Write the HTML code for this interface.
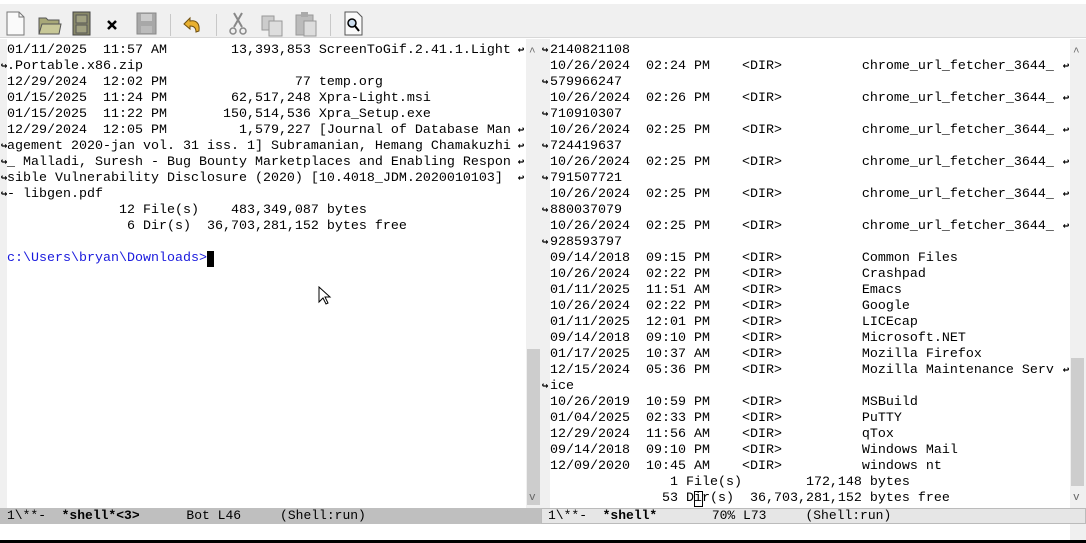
<!DOCTYPE html>
<html><head><meta charset="utf-8"><style>
*{margin:0;padding:0;box-sizing:border-box}
body{width:1086px;height:543px;overflow:hidden;background:#fff;position:relative;font-family:"Liberation Mono",monospace;font-size:13.33px}
.tb{position:absolute;left:0;top:4px;width:1086px;height:34px;background:#f0f0f0;border-bottom:1px solid #d8d8d8}
.l{position:absolute;height:16px;line-height:16px;white-space:pre;color:#000}
.fr{position:absolute;background:#f0f0f0}
.g{position:absolute;width:8px;height:16px;line-height:16px;font-size:11px;font-weight:bold;text-align:center}
.ml{position:absolute;top:508px;height:16px;line-height:16px;white-space:pre;font-size:13px}
.sep{position:absolute;top:10px;width:1px;height:22px;background:#c8c8c8}
</style></head><body>
<div class="tb">
<svg width="380" height="34" style="position:absolute;left:0;top:0">
<path d="M7 8h12l5 5v18H7z" fill="#fafafa" stroke="#777"/><path d="M19 8v5h5" fill="none" stroke="#777"/>
<path d="M39 14h7l2 2h11v14H39z" fill="#a8a878" stroke="#555"/><path d="M39 30l3-10h19l-2 10z" fill="#c8c898" stroke="#555"/>
<rect x="73" y="8" width="17" height="23" fill="#8a8a6a" stroke="#444"/><rect x="76" y="11" width="11" height="8" fill="#a0a080" stroke="#555"/><rect x="76" y="21" width="11" height="8" fill="#a0a080" stroke="#555"/>
<path d="M108 17l8 8M116 17l-8 8" stroke="#000" stroke-width="2.5"/>
<rect x="137" y="9" width="19" height="21" fill="#a8a8a8" stroke="#888"/><rect x="141" y="10" width="11" height="7" fill="#ccc"/><rect x="141" y="22" width="11" height="7" fill="#bbb"/>
<path d="M199 27c1-8-3-11-9-10v-3l-6 6 6 5v-3c4 0 6 2 6 6z" fill="#e8b030" stroke="#705010"/>
<path d="M234 9l8 14M242 9l-8 14" stroke="#888" stroke-width="2"/><circle cx="233" cy="27" r="3" fill="none" stroke="#888" stroke-width="1.5"/><circle cx="243" cy="27" r="3" fill="none" stroke="#888" stroke-width="1.5"/>
<rect x="262" y="12" width="12" height="14" fill="#ccc" stroke="#999"/><rect x="269" y="17" width="13" height="15" fill="#ddd" stroke="#999"/>
<rect x="296" y="11" width="17" height="20" fill="#bbb" stroke="#999"/><rect x="301" y="8" width="7" height="5" fill="#aaa"/><rect x="304" y="17" width="12" height="15" fill="#ddd" stroke="#999"/>
<path d="M345 8h12l5 5v18h-17z" fill="#fafafa" stroke="#555"/><circle cx="352" cy="19" r="4" fill="#cde" stroke="#000" stroke-width="1.5"/><path d="M355 22l4 5" stroke="#000" stroke-width="2"/>
</svg>
<div class="sep" style="left:170px"></div><div class="sep" style="left:216px"></div><div class="sep" style="left:330px"></div>
</div>

<div class="fr" style="left:0;top:39px;width:7px;height:469px"></div>
<div class="fr" style="left:516px;top:39px;width:10px;height:469px;background:#fff"></div>
<div class="fr" style="left:526px;top:39px;width:15px;height:469px;background:#f0f0f0"></div>
<div class="fr" style="left:527px;top:349px;width:13px;height:156px;background:#cdcdcd"></div>
<div id="lp"></div>
<div class="l" style="left:7px;top:251px;color:#1a1add">c:\Users\bryan\Downloads&gt;</div>
<div style="position:absolute;left:207px;top:251px;width:7px;height:16px;background:#000"></div>
<svg width="14" height="20" style="position:absolute;left:318px;top:286px"><path d="M1 1v15l4-4 3 6 2-1-3-6h5z" fill="#fff" stroke="#000"/></svg>

<div class="fr" style="left:541px;top:39px;width:9px;height:469px"></div>
<div class="fr" style="left:1062px;top:39px;width:8px;height:469px;background:#fff"></div>
<div class="fr" style="left:1070px;top:39px;width:16px;height:469px;background:#f0f0f0"></div>
<div class="fr" style="left:1071px;top:358px;width:13px;height:128px;background:#cdcdcd"></div>
<div class="l" style="left:1073px;top:45px;font-size:11px;color:#666">^</div>
<div class="l" style="left:529px;top:45px;font-size:11px;color:#666">^</div>
<div class="l" style="left:529px;top:490px;font-size:11px;color:#666">v</div>
<div class="l" style="left:1073px;top:490px;font-size:11px;color:#666">v</div>
<div id="r"></div>
<script>
function esc(s){return s.replace(/</g,"&lt;").replace(/>/g,"&gt;");}
function build(rows,x,fx,ax){var h="";rows.forEach(function(r,i){var t=43+i*16;
if(r[0]=="c")h+='<div class="g" style="left:'+fx+'px;top:'+t+'px">↪</div>';
h+='<div class="l" style="left:'+x+'px;top:'+t+'px">'+esc(r[1])+'</div>';
if(r[2])h+='<div class="g" style="left:'+ax+'px;top:'+t+'px">↩</div>';});return h;}
var lrows=[
["","01/11/2025  11:57 AM        13,393,853 ScreenToGif.2.41.1.Light",1],
["c",".Portable.x86.zip"],
["","12/29/2024  12:02 PM                77 temp.org"],
["","01/15/2025  11:24 PM        62,517,248 Xpra-Light.msi"],
["","01/15/2025  11:22 PM       150,514,536 Xpra_Setup.exe"],
["","12/29/2024  12:05 PM         1,579,227 [Journal of Database Man",1],
["c","agement 2020-jan vol. 31 iss. 1] Subramanian, Hemang Chamakuzhi",1],
["c","_ Malladi, Suresh - Bug Bounty Marketplaces and Enabling Respon",1],
["c","sible Vulnerability Disclosure (2020) [10.4018_JDM.2020010103]",1],
["c","- libgen.pdf"],
["","              12 File(s)    483,349,087 bytes"],
["","               6 Dir(s)  36,703,281,152 bytes free"]];
document.getElementById("lp").innerHTML=build(lrows,7,0,517);
var rows=[
["c","2140821108"],
["","10/26/2024  02:24 PM    <DIR>          chrome_url_fetcher_3644_",1],
["c","579966247"],
["","10/26/2024  02:26 PM    <DIR>          chrome_url_fetcher_3644_",1],
["c","710910307"],
["","10/26/2024  02:25 PM    <DIR>          chrome_url_fetcher_3644_",1],
["c","724419637"],
["","10/26/2024  02:25 PM    <DIR>          chrome_url_fetcher_3644_",1],
["c","791507721"],
["","10/26/2024  02:25 PM    <DIR>          chrome_url_fetcher_3644_",1],
["c","880037079"],
["","10/26/2024  02:25 PM    <DIR>          chrome_url_fetcher_3644_",1],
["c","928593797"],
["","09/14/2018  09:15 PM    <DIR>          Common Files"],
["","10/26/2024  02:22 PM    <DIR>          Crashpad"],
["","01/11/2025  11:51 AM    <DIR>          Emacs"],
["","10/26/2024  02:22 PM    <DIR>          Google"],
["","01/11/2025  12:01 PM    <DIR>          LICEcap"],
["","09/14/2018  09:10 PM    <DIR>          Microsoft.NET"],
["","01/17/2025  10:37 AM    <DIR>          Mozilla Firefox"],
["","12/15/2024  05:36 PM    <DIR>          Mozilla Maintenance Serv",1],
["c","ice"],
["","10/26/2019  10:59 PM    <DIR>          MSBuild"],
["","01/04/2025  02:33 PM    <DIR>          PuTTY"],
["","12/29/2024  11:56 AM    <DIR>          qTox"],
["","09/14/2018  09:10 PM    <DIR>          Windows Mail"],
["","12/09/2020  10:45 AM    <DIR>          windows nt"],
["","               1 File(s)        172,148 bytes"],
["","              53 Dir(s)  36,703,281,152 bytes free"]];
document.getElementById("r").innerHTML=build(rows,550,541,1062);
</script>
<div style="position:absolute;left:694px;top:491px;width:9px;height:16px;border:1px solid #000"></div>

<div class="ml" style="left:0;width:541px;background:#bfbfbf;padding-left:7px">1\**-  <b>*shell*&lt;3&gt;</b>      Bot L46     (Shell:run)</div>
<div class="ml" style="left:541px;width:545px;background:#e6e6e6;border:1px solid #bbb;padding-left:6px;line-height:14px">1\**-  <b>*shell*</b>       70% L73     (Shell:run)</div>
<div class="fr" style="left:1070px;top:524px;width:16px;height:16px"></div>
<div style="position:absolute;left:0;top:540px;width:1086px;height:3px;background:#000"></div>
</body></html>
